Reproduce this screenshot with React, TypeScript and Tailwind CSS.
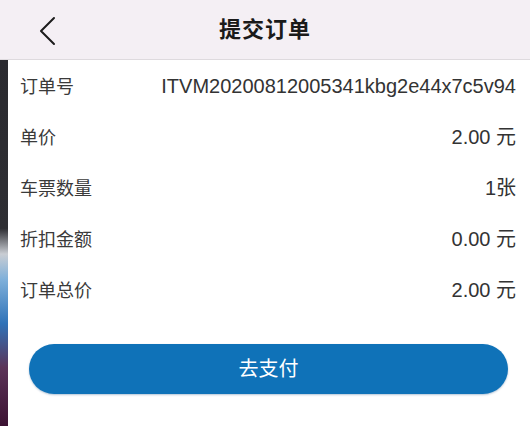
const rows = [
  { label: "订单号", value: "ITVM20200812005341kbg2e44x7c5v94" },
  { label: "单价", value: "2.00 元" },
  { label: "车票数量", value: "1张" },
  { label: "折扣金额", value: "0.00 元" },
  { label: "订单总价", value: "2.00 元" },
];

export default function App() {
  return (
    <div
      className="w-[530px] h-[426px] flex flex-col overflow-hidden bg-white"
      style={{ fontFamily: '"Liberation Sans", "Noto Sans CJK SC", sans-serif' }}
    >
      {/* header */}
      <div className="h-[60px] shrink-0 relative flex items-center justify-center bg-[#f4eff4] border-b border-[#dedade]">
        <button className="absolute left-[36px] top-[14px] w-[24px] h-[32px]">
          <svg width="24" height="32" viewBox="0 0 24 32" fill="none">
            <polyline
              points="18,4 5,17 18,30"
              stroke="#1c1c1c"
              strokeWidth="2"
              strokeLinecap="round"
              strokeLinejoin="round"
            />
          </svg>
        </button>
        <h1 className="text-[22px] font-bold text-[#1a1a1a] tracking-[1px]">提交订单</h1>
      </div>

      <div className="flex-1 flex">
        {/* background peeking at the left edge */}
        <div className="w-[8px] shrink-0 bg-[linear-gradient(to_bottom,#2a2a2f_0%,#2e2e33_46%,#c9cdd3_53%,#7fb0da_60%,#2f72b8_72%,#5b3458_84%,#3c1232_100%)]" />

        <div className="flex-1 flex flex-col pl-[12px] pr-[14px]">
          {rows.map((r) => (
            <div key={r.label} className="h-[51px] flex items-center justify-between text-[#333]">
              <span className="text-[18px] mt-[3px] text-[#3a3a3a]">{r.label}</span>
              <span className="text-[20px]">{r.value}</span>
            </div>
          ))}

          <button className="mt-[29px] ml-[9px] mr-[8px] h-[50px] rounded-full bg-[#0f72b8] text-white text-[20px] flex items-center justify-center shadow-[0_1px_2px_rgba(0,60,120,0.3)]">
            去支付
          </button>
        </div>
      </div>
    </div>
  );
}
